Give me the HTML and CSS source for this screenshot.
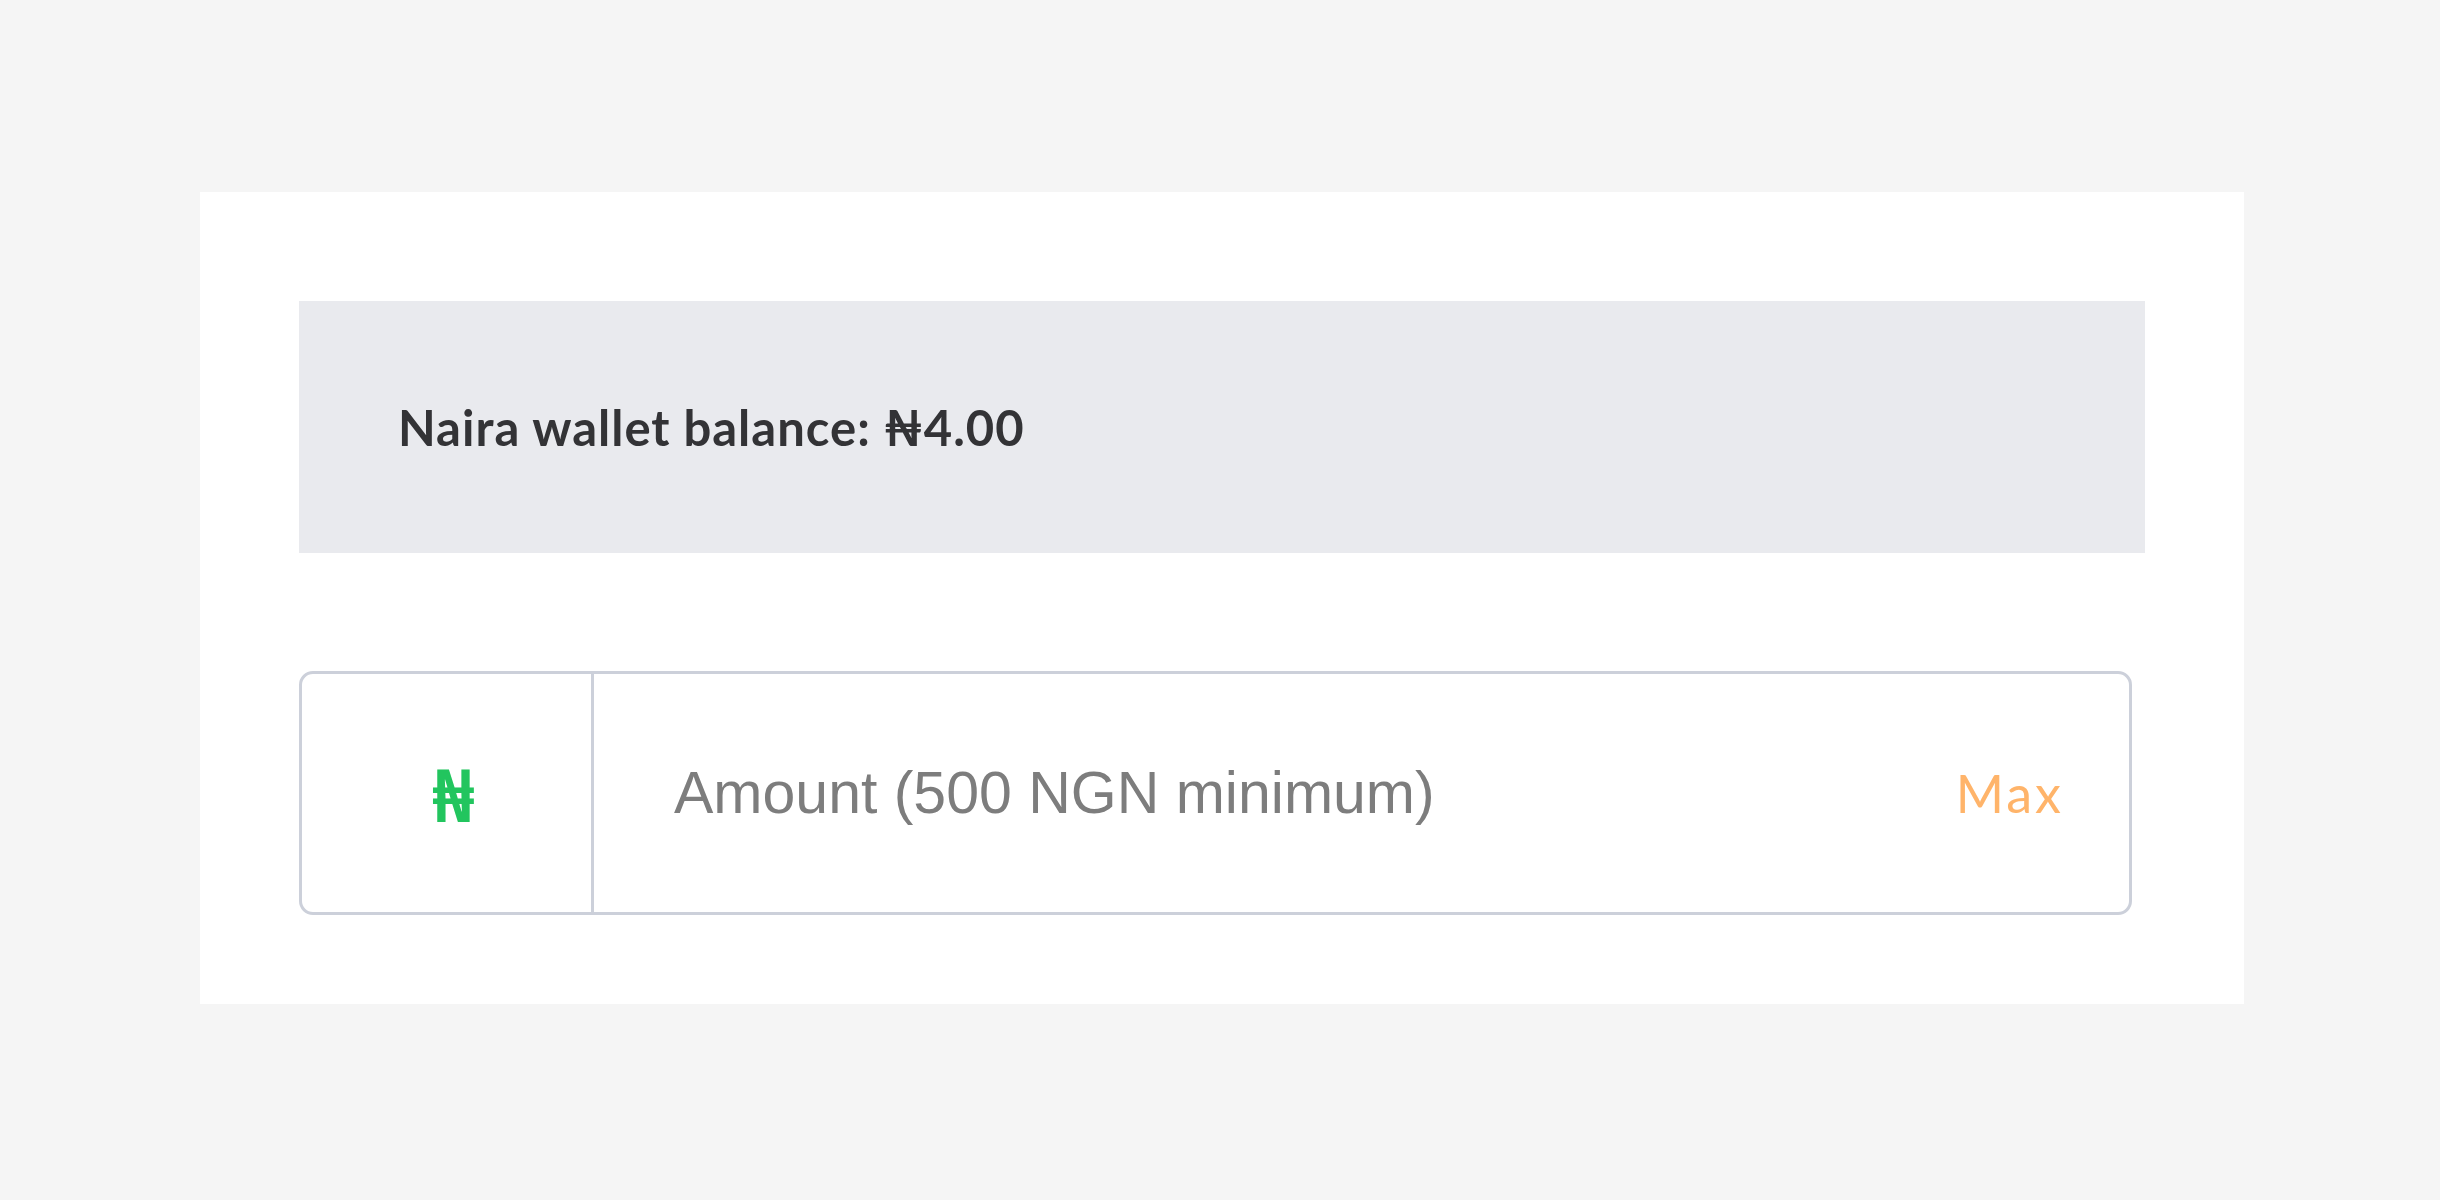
FILE: index.html
```html
<!DOCTYPE html>
<html lang="en">
<head>
<meta charset="UTF-8">
<meta name="viewport" content="width=device-width, initial-scale=1.0">
<title>Naira Wallet</title>
<link rel="stylesheet" href="styles.css">
</head>
<body>
<div class="card">
  <div class="balance">
    <p>Naira wallet balance: ₦4.00</p>
  </div>
  <form class="amount-field" id="amount-form">
    <span class="currency">₦</span>
    <input type="text" id="amount" placeholder="Amount (500 NGN minimum)" aria-label="Amount">
    <button type="button" class="max-btn">Max</button>
  </form>
</div>
</body>
</html>
```
FILE: styles.css
```css
/* page */
body {
  margin: 0;
  background-color: #f5f5f5;
  font-family: Lato, "DejaVu Sans", sans-serif;
}

.card {
  width: 2044px;
  height: 812px;
  margin: 192px 0 0 200px;
  padding: 109px 99px 0;
  box-sizing: border-box;
  background-color: #fff;
}

.balance {
  height: 252px;
  display: flex;
  align-items: center;
  padding-left: 99px;
  background-color: #e9eaee;
}

.balance p {
  margin: 0;
  font-size: 49px;
  font-weight: 700;
  letter-spacing: 1px;
  color: #333336;
}

/* amount input */
.amount-field {
  display: flex;
  align-items: center;
  width: 1833px;
  height: 244px;
  margin-top: 118px;
  box-sizing: border-box;
  border: 3px solid #ccd0da;
  border-radius: 14px;
}

.currency {
  width: 292px;
  height: 100%;
  display: flex;
  align-items: center;
  justify-content: center;
  padding-left: 14px;
  box-sizing: border-box;
  border-right: 3px solid #ccd0da;
  font-family: "Noto Sans", "DejaVu Sans", sans-serif;
  font-size: 74px;
  font-weight: 700;
  color: #22c55e;
}

input[type="text"] {
  flex: 1;
  min-width: 0;
  border: none;
  outline: none;
  padding: 0 0 0 80px;
  font-family: "Liberation Sans", Arial, sans-serif;
  font-size: 59px;
  color: #333;
  background: transparent;
}

input::placeholder {
  color: #7d7d7d;
}

.max-btn {
  border: none;
  background: none;
  padding: 0 65px 0 20px;
  font-family: Lato, sans-serif;
  font-size: 52px;
  letter-spacing: 3px;
  color: #ffb46a;
  cursor: pointer;
}
```
